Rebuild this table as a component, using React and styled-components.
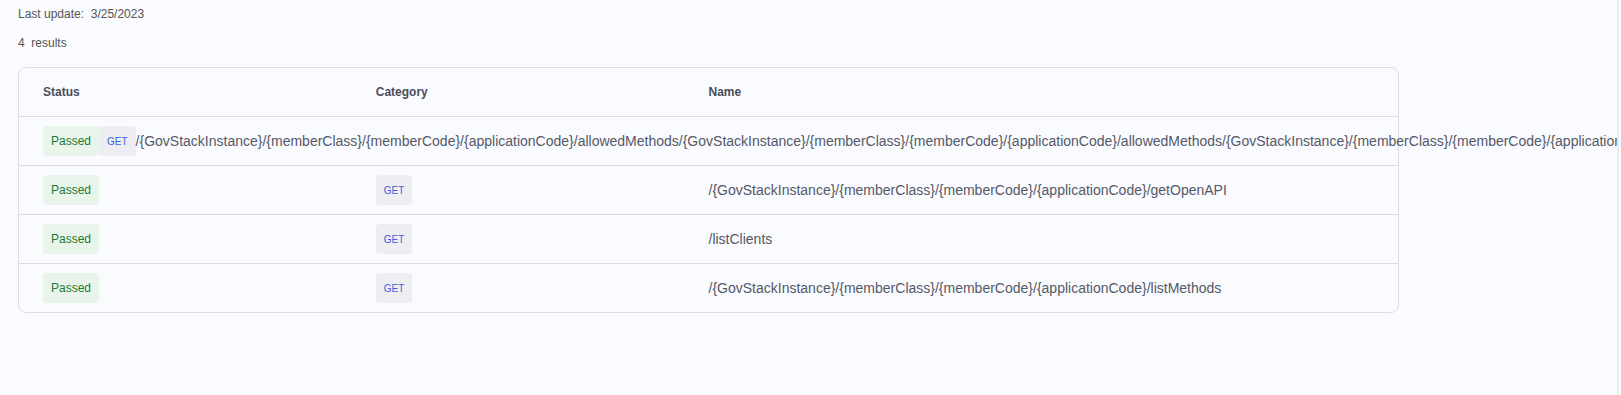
import styled, { createGlobalStyle } from "styled-components";

const GlobalStyle = createGlobalStyle`
  html, body {
    margin: 0;
    padding: 0;
    background: #fafbfe;
  }
  body {
    font-family: "Liberation Sans", Arial, sans-serif;
  }
`;

const Page = styled.div`
  width: 1619px;
  height: 395px;
  box-sizing: border-box;
  padding: 6px 18px 0;
  overflow: hidden;
  border-right: 2px solid #ececef;
`;

const Meta = styled.div`
  font-size: 12px;
  line-height: 16px;
  color: #555;
  white-space: pre;
  margin-bottom: ${(p) => p.$gap || 0}px;
`;

const Table = styled.div`
  width: 1381px;
  box-sizing: border-box;
  border: 1px solid #dcdde3;
  border-radius: 8px;
`;

const Row = styled.div`
  display: grid;
  grid-template-columns: 1fr 1fr 2fr;
  align-items: center;
  height: ${(p) => (p.$head ? 48 : 48)}px;
  padding: 0 24px;
  border-top: ${(p) => (p.$head ? "none" : "1px solid #dcdde3")};
`;

const InlineRow = styled.div`
  display: flex;
  align-items: center;
  height: 48px;
  padding: 0 24px;
  border-top: 1px solid #dcdde3;
  white-space: nowrap;
`;

const HeadCell = styled.div`
  font-size: 12px;
  font-weight: 700;
  color: #4b4c5c;
`;

const Badge = styled.span`
  display: inline-flex;
  align-items: center;
  height: 30px;
  padding: 0 8px;
  border-radius: 4px;
  font-size: ${(p) => (p.$method ? 10 : 12)}px;
  background: ${(p) => (p.$method ? "#ededf2" : "#e9f5eb")};
  color: ${(p) => (p.$method ? "#3f5fe0" : "#1b7a33")};
  flex-shrink: 0;
`;

const Name = styled.span`
  font-size: 14px;
  color: #545868;
  white-space: nowrap;
`;

const rows = [
  "/{GovStackInstance}/{memberClass}/{memberCode}/{applicationCode}/getOpenAPI",
  "/listClients",
  "/{GovStackInstance}/{memberClass}/{memberCode}/{applicationCode}/listMethods",
];

const longName =
  "/{GovStackInstance}/{memberClass}/{memberCode}/{applicationCode}/allowedMethods/{GovStackInstance}/{memberClass}/{memberCode}/{applicationCode}/allowedMethods/{GovStackInstance}/{memberClass}/{memberCode}/{applicationCode}/allowedMethods";

export default function App() {
  return (
    <>
      <GlobalStyle />
      <Page>
        <Meta $gap={13}>{"Last update:  3/25/2023"}</Meta>
        <Meta $gap={16}>{"4  results"}</Meta>
        <Table>
          <Row $head>
            <HeadCell>Status</HeadCell>
            <HeadCell>Category</HeadCell>
            <HeadCell>Name</HeadCell>
          </Row>
          <InlineRow>
            <Badge>Passed</Badge>
            <Badge $method>GET</Badge>
            <Name>{longName}</Name>
          </InlineRow>
          {rows.map((name) => (
            <Row key={name}>
              <div>
                <Badge>Passed</Badge>
              </div>
              <div>
                <Badge $method>GET</Badge>
              </div>
              <Name>{name}</Name>
            </Row>
          ))}
        </Table>
      </Page>
    </>
  );
}
